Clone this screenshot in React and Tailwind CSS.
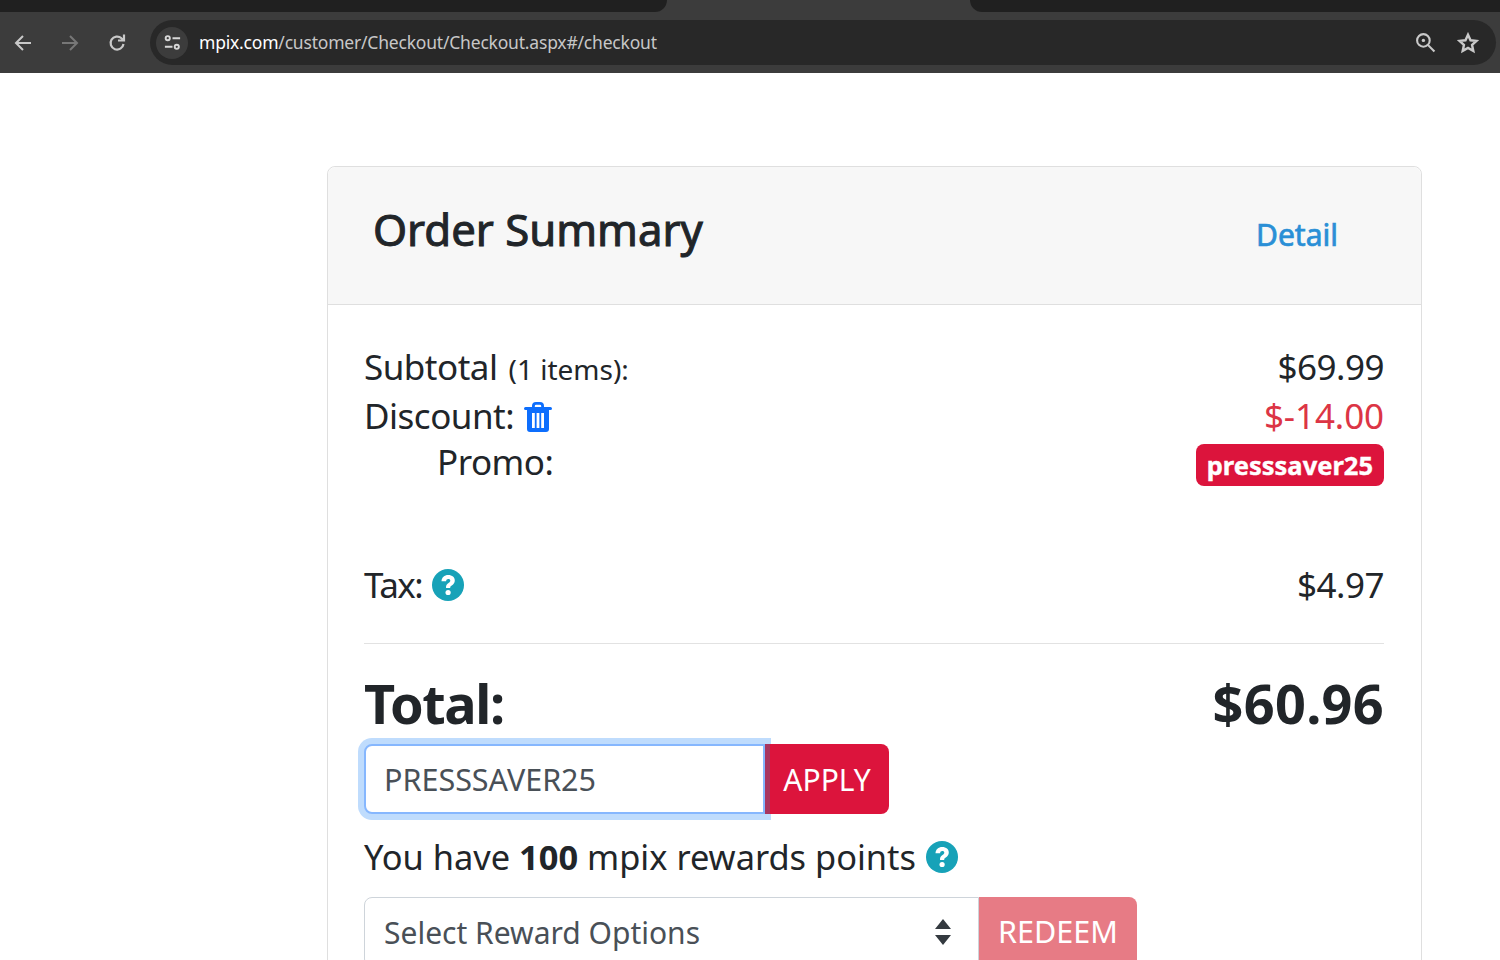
const font = { fontFamily: '"Noto Sans", sans-serif' };

const TrashIcon = () => (
  <svg viewBox="0 0 28 30" className="w-[28px] h-[30px]" fill="#0d6efd">
    <path d="M8 5V4a4 4 0 0 1 4-4h4a4 4 0 0 1 4 4v1h6.500a1.500 1.500 0 0 1 0 3h-25a1.500 1.500 0 0 1 0-3H8zm2.800 0h6.400V4a1.300 1.300 0 0 0-1.300-1.300h-3.800A1.300 1.300 0 0 0 10.800 4v1z" fillRule="evenodd" />
    <path d="M3 7h22v20a3 3 0 0 1-3 3H6a3 3 0 0 1-3-3V7zm5 4v15h2.800V11H8zm4.600 0v15h2.800V11h-2.800zm4.600 0v15H20V11h-2.800z" fillRule="evenodd" />
  </svg>
);

const HelpIcon = () => (
  <svg viewBox="0 0 32 32" className="w-[32px] h-[32px]">
    <circle cx="16" cy="16" r="16" fill="#17a2b8" />
    <path d="M9.500 12.200C9.700 8.500 12.300 6 16.300 6c3.900 0 6.500 2.300 6.500 5.500 0 2.300-1.100 3.700-3 4.900-1.300.8-1.600 1.300-1.600 2.600h-4.200c-.1-2.700.6-3.900 2.500-5.100 1.300-.8 1.800-1.400 1.800-2.200 0-1-.8-1.700-2-1.700-1.300 0-2.100.8-2.200 2.200H9.500z" fill="white" />
    <circle cx="16.100" cy="23.500" r="2.600" fill="white" />
  </svg>
);

const Row = ({ left, right, className }) => (
  <div className={"flex justify-between items-center " + className}>
    <div className="flex items-center">{left}</div>
    {right}
  </div>
);

export default function App() {
  return (
    <div style={font} className="h-[960px] overflow-hidden bg-white text-[#212529]">
      <div className="h-[20px] bg-[#3c3c3c] flex">
        <div className="w-[667px] h-[12px] bg-[#202020] rounded-br-[14px]" />
        <div className="w-[303px]" />
        <div className="flex-1 h-[12px] bg-[#202020] rounded-bl-[14px]" />
      </div>
      <div className="h-[53px] bg-[#3c3c3c] flex pr-[4px]">
        <div className="w-[150px] h-[45px] flex items-center pl-[13px] gap-[27px]">
          <svg viewBox="0 0 20 20" className="w-[20px] h-[20px]" fill="none" stroke="#c9c9c9" strokeWidth="2"><path d="M18 10H3M10 3l-7 7 7 7" /></svg>
          <svg viewBox="0 0 20 20" className="w-[20px] h-[20px]" fill="none" stroke="#777777" strokeWidth="2"><path d="M2 10h15M10 3l7 7-7 7" /></svg>
          <svg viewBox="0 0 20 20" className="w-[20px] h-[20px]" fill="none" stroke="#c9c9c9" strokeWidth="2.200"><path d="M16.500 11a6.500 6.500 0 1 1-2-5.700L17 7.500M17 1.500v6h-6" /></svg>
        </div>
        <div className="flex-1 h-[45px] bg-[#282828] rounded-full flex items-center pl-[6px] pr-[17px]">
          <div className="w-[32px] h-[32px] rounded-full bg-[#3c3c3c] flex items-center justify-center shrink-0">
            <svg viewBox="0 0 20 20" className="w-[19px] h-[19px]" fill="none" stroke="#d8d8d8" strokeWidth="2">
              <circle cx="5" cy="5.500" r="2.200" /><path d="M10 5.500h8M2 14.500h8" /><circle cx="14.500" cy="14.500" r="2.200" />
            </svg>
          </div>
          <div className="ml-[11px] text-[17.5px] text-[#c7c7c7] tracking-[-0.2px] flex-1">
            <span className="text-white">mpix.com</span>/customer/Checkout/Checkout.aspx#/checkout
          </div>
          <svg viewBox="0 0 20 20" className="w-[21px] h-[21px] mr-[21px]" fill="none" stroke="#c9c9c9" strokeWidth="2">
            <circle cx="8" cy="8" r="6" /><path d="M12.500 12.500L18.500 18.500" /><circle cx="8" cy="8" r="1.600" fill="#c9c9c9" stroke="none" />
          </svg>
          <svg viewBox="0 0 20 20" className="w-[22px] h-[22px]" fill="none" stroke="#c9c9c9" strokeWidth="2.200">
            <path d="M10 2.500l2.300 5 5.400.6-4 3.700 1.100 5.400-4.800-2.700-4.800 2.700 1.100-5.400-4-3.700 5.400-.6z" />
          </svg>
        </div>
      </div>

      <div className="pl-[327px] pr-[78px] pt-[93px]">
        <div className="border border-[#dfdfdf] rounded-[8px]">
          <div className="h-[138px] bg-[#f7f7f7] border-b border-[#dfdfdf] rounded-t-[8px] flex justify-between pl-[45px] pr-[83px]">
            <div className="text-[43.700px] leading-[60px] mt-[32px] [-webkit-text-stroke:1px_#212529]">Order Summary</div>
            <div className="text-[30px] text-[#2a8fd6] leading-[44px] mt-[46px] [-webkit-text-stroke:0.7px_#2a8fd6]">Detail</div>
          </div>
          <div className="pl-[36px] pr-[37px] pt-[37px] h-[700px]">
            <Row
              className="h-[50px] text-[35px] tracking-[-0.5px]"
              left={<><span>Subtotal</span><span className="text-[28px] ml-[11px] mt-[3px] tracking-normal">(1 items):</span></>}
              right={<span>$69.99</span>}
            />
            <Row
              className="h-[49px] text-[35px] tracking-[-0.5px]"
              left={<><span>Discount:</span><span className="ml-[10px]"><TrashIcon /></span></>}
              right={<span className="text-[#dc3545] tracking-[-0.1px]">$-14.00</span>}
            />
            <div className="flex justify-between items-center h-[44px] text-[35px] tracking-[-0.5px]">
              <span className="ml-[73px] mb-[2px]">Promo:</span>
              <span className="bg-[#dc143c] text-white text-[25.500px] font-bold tracking-normal rounded-[8px] h-[42px] mt-[4px] px-[11px] flex items-center [-webkit-text-stroke:0.4px_#ffffff]">presssaver25</span>
            </div>
            <Row
              className="h-[50px] mt-[75px] text-[35px]"
              left={<><span className="tracking-[-1.500px]">Tax:</span><span className="ml-[10px] flex"><HelpIcon /></span></>}
              right={<span className="tracking-[-0.5px]">$4.97</span>}
            />
            <div className="border-t border-[#e2e2e2] mt-[33px]" />
            <Row
              className="h-[64px] mt-[27px] text-[54px] font-bold"
              left={<span className="tracking-[-1.400px]">Total:</span>}
              right={<span className="tracking-[0.3px]">$60.96</span>}
            />
            <div className="flex mt-[9px] h-[70px] text-[30.500px]">
              <div className="w-[401px] h-[70px] bg-white border-2 border-[#86b7fe] rounded-l-[8px] shadow-[0_0_0_6px_#bfdcfd] flex items-center pl-[18px] pt-[2px] text-[#495057] z-10">PRESSSAVER25</div>
              <div className="w-[124px] h-[70px] bg-[#dc143c] text-[30px] text-white rounded-r-[8px] flex items-center justify-center border-l-[5px] border-[#a8355f] pr-[5px] z-20">APPLY</div>
            </div>
            <div className="flex items-center h-[52px] mt-[17px] text-[34.400px]">
              <span>You have <b>100</b> mpix rewards points</span>
              <span className="ml-[10px] flex"><HelpIcon /></span>
            </div>
            <div className="flex mt-[14px] h-[70px] text-[30px]">
              <div className="w-[615px] h-[70px] border border-[#ced4da] rounded-l-[8px] flex items-center justify-between pl-[19px] pr-[26px] text-[#495057]">
                <span>Select Reward Options</span>
                <svg viewBox="0 0 18 26" className="w-[18px] h-[26px]" fill="#343a40"><path d="M9 0l8 10H1zM9 26l-8-10h16z" /></svg>
              </div>
              <div className="w-[158px] h-[70px] bg-[#e77b85] text-white text-[30.500px] rounded-r-[8px] flex items-center justify-center">REDEEM</div>
            </div>
          </div>
        </div>
      </div>
    </div>
  );
}
